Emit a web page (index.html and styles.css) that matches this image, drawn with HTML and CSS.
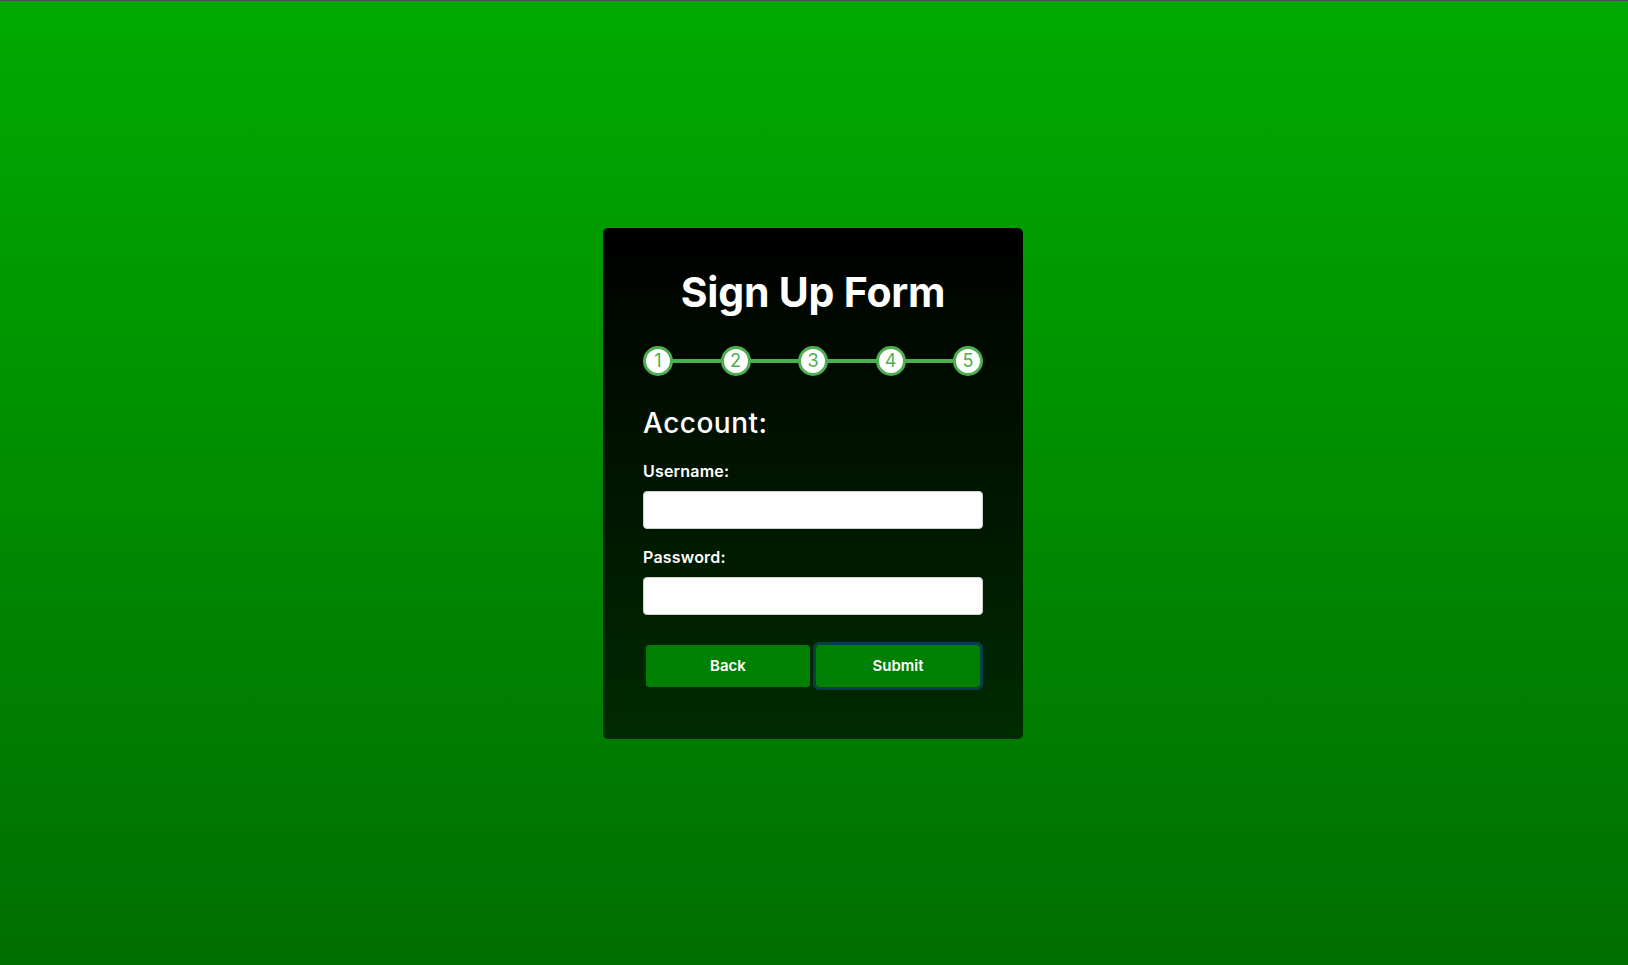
FILE: index.html
```html
<!DOCTYPE html>
<html lang="en">
<head>
<meta charset="utf-8">
<title>Sign Up Form</title>
<link rel="stylesheet" href="styles.css">
</head>
<body>
  <main class="card">
    <h1 class="title">Sign Up Form</h1>
    <div class="steps">
      <span class="step">1</span>
      <span class="step">2</span>
      <span class="step">3</span>
      <span class="step">4</span>
      <span class="step">5</span>
    </div>
    <form class="form">
      <h2 class="section">Account:</h2>
      <label class="label" for="username">Username:</label>
      <input class="input" id="username" type="text">
      <label class="label label-second" for="password">Password:</label>
      <input class="input" id="password" type="password">
      <div class="actions">
        <button type="button" class="btn">Back</button>
        <button type="button" class="btn btn-focus">Submit</button>
      </div>
    </form>
  </main>
</body>
</html>
```

FILE: styles.css
```css
* {
  box-sizing: border-box;
}

html, body {
  height: 100%;
}

body {
  margin: 0;
  border-top: 1px solid #4f4f4f;
  background: linear-gradient(to bottom, #00ab00, #006e00);
  font-family: "Inter", "Open Sans", sans-serif;
  display: flex;
  align-items: center;
  justify-content: center;
}

.card {
  width: 420px;
  padding: 40px 40px 49px;
  margin-right: 2px;
  border-radius: 5px;
  background: linear-gradient(to bottom, #000000, #002b00);
  color: #ffffff;
}

.title {
  margin: 0 0 30px;
  font-size: 41px;
  line-height: 48px;
  font-weight: 700;
  text-align: center;
  letter-spacing: -0.2px;
}

.steps {
  position: relative;
  display: flex;
  justify-content: space-between;
  align-items: center;
  height: 30px;
  margin-bottom: 30px;
}

.steps::before {
  content: "";
  position: absolute;
  left: 10px;
  right: 10px;
  top: 13px;
  height: 4px;
  background: #4caf50;
}

.step {
  position: relative;
  width: 30px;
  height: 30px;
  border: 3px solid #4caf50;
  border-radius: 50%;
  background: #ffffff;
  color: #4caf50;
  font-size: 18px;
  line-height: 24px;
  text-align: center;
  font-weight: 400;
}

.form {
  display: flex;
  flex-direction: column;
}

.section {
  margin: 0 0 22px;
  font-size: 28px;
  line-height: 34px;
  font-weight: 500;
  letter-spacing: 0.5px;
}

.label {
  font-size: 16px;
  line-height: 18px;
  font-weight: 600;
  letter-spacing: 0.2px;
  margin-bottom: 11px;
}

.label-second {
  margin-top: 19px;
}

.input {
  width: 100%;
  height: 38px;
  border: 1px solid #d0d0d0;
  border-radius: 4px;
  background: #ffffff;
  padding: 0 10px;
  font-size: 15px;
}

.actions {
  display: flex;
  align-items: center;
  margin-top: 27px;
}

.btn {
  flex: 1;
  height: 48px;
  border: 3px solid transparent;
  background-clip: padding-box;
  background-color: #008000;
  border-radius: 6px;
  color: #ffffff;
  font-family: "Inter", "Open Sans", sans-serif;
  font-size: 15px;
  font-weight: 600;
  cursor: pointer;
}

.btn-focus {
  border-color: #0b3f48;
}
```
